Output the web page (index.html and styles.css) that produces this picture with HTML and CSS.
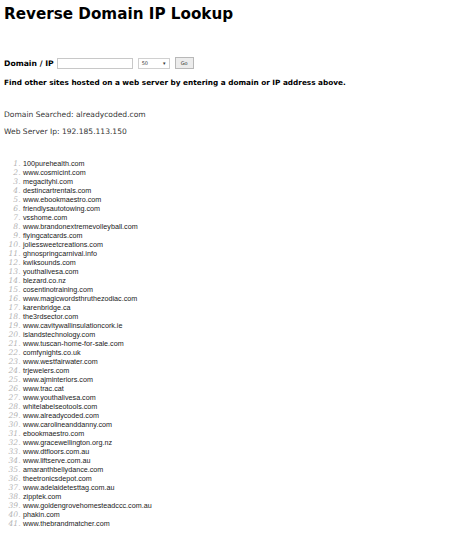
FILE: index.html
```html
<!DOCTYPE html>
<html>
<head>
<meta charset="utf-8">
<title>Reverse Domain IP Lookup</title>
<link rel="stylesheet" href="styles.css">
</head>
<body>
<div class="page">
  <h1 class="title">Reverse Domain IP Lookup</h1>
  <form class="lookup">
    <label class="lookup-label">Domain / IP</label>
    <span class="text-input"></span>
    <span class="select">50<span class="caret">&#9662;</span></span>
    <span class="go">Go</span>
  </form>
  <p class="hint">Find other sites hosted on a web server by entering a domain or IP address above.</p>
  <p class="info first">Domain Searched: alreadycoded.com</p>
  <p class="info">Web Server Ip: 192.185.113.150</p>
  <ol class="sites">
    <li><span>100purehealth.com</span></li>
    <li><span>www.cosmicint.com</span></li>
    <li><span>megacityhi.com</span></li>
    <li><span>destincartrentals.com</span></li>
    <li><span>www.ebookmaestro.com</span></li>
    <li><span>friendlysautotowing.com</span></li>
    <li><span>vsshome.com</span></li>
    <li><span>www.brandonextremevolleyball.com</span></li>
    <li><span>flyingcatcards.com</span></li>
    <li><span>joliessweetcreations.com</span></li>
    <li><span>ghnospringcarnival.info</span></li>
    <li><span>kwiksounds.com</span></li>
    <li><span>youthalivesa.com</span></li>
    <li><span>blezard.co.nz</span></li>
    <li><span>cosentinotraining.com</span></li>
    <li><span>www.magicwordsthruthezodiac.com</span></li>
    <li><span>karenbridge.ca</span></li>
    <li><span>the3rdsector.com</span></li>
    <li><span>www.cavitywallinsulationcork.ie</span></li>
    <li><span>islandstechnology.com</span></li>
    <li><span>www.tuscan-home-for-sale.com</span></li>
    <li><span>comfynights.co.uk</span></li>
    <li><span>www.westfairwater.com</span></li>
    <li><span>trjewelers.com</span></li>
    <li><span>www.ajminteriors.com</span></li>
    <li><span>www.trac.cat</span></li>
    <li><span>www.youthalivesa.com</span></li>
    <li><span>whitelabelseotools.com</span></li>
    <li><span>www.alreadycoded.com</span></li>
    <li><span>www.carolineanddanny.com</span></li>
    <li><span>ebookmaestro.com</span></li>
    <li><span>www.gracewellington.org.nz</span></li>
    <li><span>www.dtfloors.com.au</span></li>
    <li><span>www.liftserve.com.au</span></li>
    <li><span>amaranthbellydance.com</span></li>
    <li><span>theetronicsdepot.com</span></li>
    <li><span>www.adelaidetesttag.com.au</span></li>
    <li><span>zipptek.com</span></li>
    <li><span>www.goldengrovehomesteadccc.com.au</span></li>
    <li><span>phakin.com</span></li>
    <li><span>www.thebrandmatcher.com</span></li>
  </ol>
</div>
</body>
</html>
```
FILE: styles.css
```css
html, body {
  margin: 0;
  padding: 0;
  background: #ffffff;
}
.page {
  padding: 4px 4px 0 4px;
  font-family: "DejaVu Sans", Verdana, sans-serif;
  color: #000;
}
.title {
  margin: 0;
  font-size: 15.2px;
  font-weight: bold;
  line-height: 20px;
}
.lookup {
  margin: 33px 0 0 0;
  display: flex;
  align-items: center;
  height: 12px;
}
.lookup-label {
  font-size: 7.7px;
  font-weight: bold;
  margin-right: 3px;
}
.text-input {
  width: 74px;
  height: 9px;
  border: 1px solid #c8c8c8;
  background: #fff;
}
.select {
  margin-left: 5px;
  width: 27px;
  height: 9px;
  border: 1px solid #d0d0d0;
  font-size: 5px;
  line-height: 9px;
  padding-left: 3px;
  box-sizing: content-box;
  position: relative;
  color: #333;
}
.caret {
  position: absolute;
  right: 3px;
  top: 0;
  font-size: 5px;
}
.go {
  margin-left: 5px;
  width: 17px;
  height: 10px;
  border: 1px solid #b8b8b8;
  background: #ececec;
  font-size: 5px;
  line-height: 10px;
  text-align: center;
  color: #333;
}
.hint {
  margin: 9px 0 0 0;
  font-size: 7.3px;
  font-weight: bold;
  line-height: 10px;
}
.info {
  margin: 22px 0 0 0;
  font-size: 7.55px;
  line-height: 10px;
  color: #333;
}
.info + .info {
  margin-top: 7px;
}
.sites {
  margin: 22px 0 0 0;
  padding-left: 19px;
  font-family: Georgia, "DejaVu Serif", serif;
  font-style: italic;
  font-size: 7.6px;
  color: #b4b4b4;
  line-height: 9px;
}
.sites li {
  height: 9px;
}
.sites li span {
  font-family: "Liberation Sans", Arial, sans-serif;
  font-style: normal;
  font-size: 7.2px;
  line-height: 9px;
  color: #1a1a1a;
}
```
